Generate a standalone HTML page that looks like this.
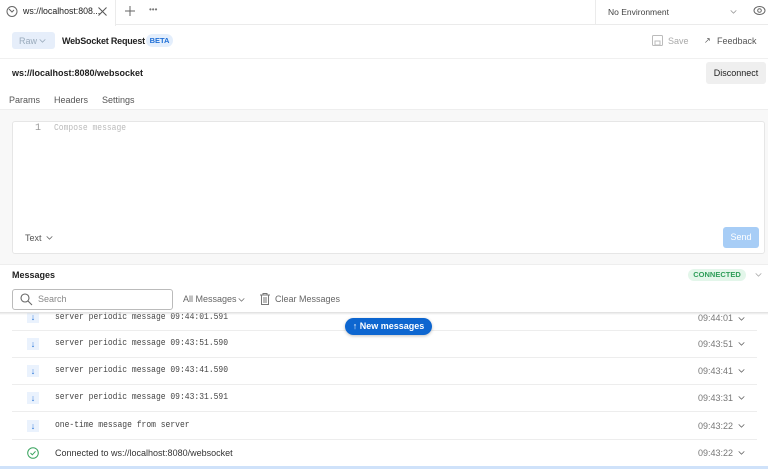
<!DOCTYPE html>
<html><head><style>
*{box-sizing:border-box;margin:0;padding:0}
body{width:768px;height:469px;overflow:hidden;font-family:"Liberation Sans",sans-serif;font-size:9px;color:#212121;background:#fff;position:relative}
.a{position:absolute;white-space:nowrap}
.mono{font-family:"Liberation Mono",monospace}
.row{position:absolute;left:12px;width:745px;height:27px;border-bottom:1px solid #ededed}
.row .ic{position:absolute;left:15px;top:7px;width:12px;height:12px;background:#eaf2fd;color:#1f6fd6;font-size:9px;text-align:center;line-height:12px}
.row .t{position:absolute;left:43px;top:8px;font-size:9px;color:#333;white-space:nowrap}
.row .m{font-family:"Liberation Mono",monospace;font-size:9px;top:7px;color:#444;transform:scaleX(.89);transform-origin:0 0}
.row .tm{position:absolute;right:24px;top:8px;font-size:9px;color:#777}
.row .cv{position:absolute;right:12px;top:11px}
</style></head><body>
<svg width="0" height="0" style="position:absolute"><defs><symbol id="cv" viewBox="0 0 8 5"><path d="M.5.5L4 4 7.5.5" fill="none" stroke="currentColor" stroke-width="1"/></symbol></defs></svg>
<div class="a" style="left:0;top:0;width:768px;height:25px;border-bottom:1px solid #ebebeb"></div>
<div class="a" style="left:0;top:0;width:116px;height:26px;border-right:1px solid #ebebeb;background:#fff"></div>
<svg class="a" style="left:6px;top:5px" width="12" height="13" viewBox="0 0 12 13"><circle cx="6" cy="6.5" r="5" fill="none" stroke="#666" stroke-width="1"/><path d="M3 4l3 3 2-2" fill="none" stroke="#666"/></svg>
<div class="a" style="left:23px;top:6px;font-size:8.8px">ws://localhost:808...</div>
<svg class="a" style="left:98px;top:7px" width="9" height="9" viewBox="0 0 9 9"><path d="M.5.5l8 8M8.5.5l-8 8" stroke="#555"/></svg>
<svg class="a" style="left:125px;top:6px" width="10" height="10" viewBox="0 0 10 10"><path d="M5 0v10M0 5h10" stroke="#666"/></svg>
<div class="a" style="left:149px;top:5px;font-size:8px;color:#777">•••</div>
<div class="a" style="left:595px;top:0;width:1px;height:25px;background:#ebebeb"></div>
<div class="a" style="left:608px;top:7px;font-size:8.5px;color:#444">No Environment</div>
<svg class="a" style="left:730px;top:10px;color:#999" width="7" height="4"><use href="#cv"/></svg>
<svg class="a" style="left:753px;top:5px" width="13" height="11" viewBox="0 0 13 11"><ellipse cx="6.5" cy="5.5" rx="5.5" ry="4" fill="none" stroke="#666"/><circle cx="6.5" cy="5.5" r="1.8" fill="none" stroke="#666"/></svg>
<div class="a" style="left:12px;top:32px;width:43px;height:17px;background:#e6eefa;border-radius:3px;color:#9ab;font-size:9px;padding:4px 0 0 7px">Raw</div>
<svg class="a" style="left:39px;top:39px;color:#9ab" width="7" height="4"><use href="#cv"/></svg>
<div class="a" style="left:62px;top:36px;font-weight:bold;font-size:9px;letter-spacing:-.2px">WebSocket Request</div>
<div class="a" style="left:146px;top:34px;width:27px;height:13px;background:#e3eefc;border-radius:7px;color:#1f6fd6;font-size:7.5px;font-weight:bold;text-align:center;line-height:13px">BETA</div>
<svg class="a" style="left:652px;top:35px" width="11" height="11" viewBox="0 0 11 11"><rect x=".5" y=".5" width="10" height="10" rx="1" fill="none" stroke="#bbb"/><rect x="3" y="6" width="5" height="4" fill="none" stroke="#bbb"/></svg>
<div class="a" style="left:668px;top:36px;font-size:9px;color:#aaa">Save</div>
<div class="a" style="left:704px;top:36px;font-size:8px;color:#555">↗</div>
<div class="a" style="left:717px;top:36px;font-size:9px;color:#555">Feedback</div>
<div class="a" style="left:0;top:58px;width:768px;height:1px;background:#f0f0f0"></div>
<div class="a" style="left:12px;top:68px;font-weight:bold;font-size:9px">ws://localhost:8080/websocket</div>
<div class="a" style="left:706px;top:62px;width:60px;height:22px;background:#efefef;border-radius:3px;font-size:9px;text-align:center;line-height:22px">Disconnect</div>
<div class="a" style="left:9px;top:95px;font-size:9px;color:#555">Params</div>
<div class="a" style="left:54px;top:95px;font-size:9px;color:#555">Headers</div>
<div class="a" style="left:102px;top:95px;font-size:9px;color:#555">Settings</div>
<div class="a" style="left:0;top:109px;width:768px;height:156px;background:#f8f8f8;border-top:1px solid #eee;border-bottom:1px solid #eee"></div>
<div class="a" style="left:12px;top:121px;width:753px;height:133px;background:#fff;border:1px solid #e6e6e6;border-radius:3px"></div>
<div class="a mono" style="left:35px;top:123px;font-size:10px;color:#999">1</div>
<div class="a mono" style="left:54px;top:123px;font-size:9px;color:#bbb;transform:scaleX(.89);transform-origin:0 0">Compose message</div>
<div class="a" style="left:25px;top:233px;font-size:9px;color:#555">Text</div>
<svg class="a" style="left:46px;top:236px;color:#666" width="7" height="4"><use href="#cv"/></svg>
<div class="a" style="left:723px;top:227px;width:36px;height:21px;background:#a7cdf6;border-radius:3px;color:#fff;font-size:9px;text-align:center;line-height:21px">Send</div>
<div class="a" style="left:12px;top:270px;font-weight:bold;font-size:9px">Messages</div>
<div class="a" style="left:688px;top:269px;width:58px;height:12px;background:#e3f6ea;border-radius:6px;color:#2f9e5a;font-size:7.5px;font-weight:bold;text-align:center;line-height:12px">CONNECTED</div>
<svg class="a" style="left:755px;top:273px;color:#aaa" width="7" height="4"><use href="#cv"/></svg>
<div class="a" style="left:12px;top:289px;width:161px;height:21px;border:1px solid #bbb;border-radius:3px;background:#fff"></div>
<svg class="a" style="left:20px;top:293px" width="13" height="13" viewBox="0 0 13 13"><circle cx="5" cy="5" r="4" fill="none" stroke="#666" stroke-width="1.1"/><path d="M8 8l4 4" stroke="#666" stroke-width="1.1"/></svg>
<div class="a" style="left:38px;top:294px;font-size:9px;color:#888">Search</div>
<div class="a" style="left:183px;top:294px;font-size:9px;color:#666">All Messages</div>
<svg class="a" style="left:238px;top:298px;color:#777" width="7" height="4"><use href="#cv"/></svg>
<svg class="a" style="left:260px;top:293px" width="10" height="12" viewBox="0 0 10 12"><path d="M0 2h10M3 2V.5h4V2M1.5 2v9.5h7V2M4 4v6M6 4v6" fill="none" stroke="#777"/></svg>
<div class="a" style="left:275px;top:294px;font-size:9px;color:#666">Clear Messages</div>
<div class="row" style="top:304px"><div class="ic" style="top:9px;height:10px;line-height:9px">↓</div><div class="t m" style="top:8px">server periodic message 09:44:01.591</div><div class="tm" style="top:9px">09:44:01</div><svg class="cv" style="top:13px;color:#666" width="7" height="4"><use href="#cv"/></svg></div>
<div class="row" style="top:331px"><div class="ic">↓</div><div class="t m">server periodic message 09:43:51.590</div><div class="tm">09:43:51</div><svg class="cv" style="color:#666" width="7" height="4"><use href="#cv"/></svg></div>
<div class="row" style="top:358px"><div class="ic">↓</div><div class="t m">server periodic message 09:43:41.590</div><div class="tm">09:43:41</div><svg class="cv" style="color:#666" width="7" height="4"><use href="#cv"/></svg></div>
<div class="row" style="top:385px"><div class="ic">↓</div><div class="t m">server periodic message 09:43:31.591</div><div class="tm">09:43:31</div><svg class="cv" style="color:#666" width="7" height="4"><use href="#cv"/></svg></div>
<div class="row" style="top:413px"><div class="ic">↓</div><div class="t m">one-time message from server</div><div class="tm">09:43:22</div><svg class="cv" style="color:#666" width="7" height="4"><use href="#cv"/></svg></div>
<div class="row" style="top:440px;border-bottom:none"><svg style="position:absolute;left:15px;top:7px" width="12" height="12" viewBox="0 0 12 12"><circle cx="6" cy="6" r="5.3" fill="none" stroke="#3aa45f"/><path d="M3.5 6l1.8 1.8L8.5 4.3" fill="none" stroke="#3aa45f"/></svg><div class="t">Connected to ws://localhost:8080/websocket</div><div class="tm">09:43:22</div><svg class="cv" style="color:#666" width="7" height="4"><use href="#cv"/></svg></div>
<div class="a" style="left:0;top:312px;width:768px;height:3px;background:linear-gradient(rgba(200,200,200,.6),rgba(255,255,255,0))"></div>
<div class="a" style="left:345px;top:318px;width:87px;height:17px;background:#0d66d0;border-radius:9px;color:#fff;font-size:9px;font-weight:bold;text-align:center;line-height:17px;box-shadow:0 1px 3px rgba(0,0,0,.25)">↑ New messages</div>
<div class="a" style="left:0;top:466px;width:768px;height:3px;background:#cfe2fa"></div>
</body></html>
